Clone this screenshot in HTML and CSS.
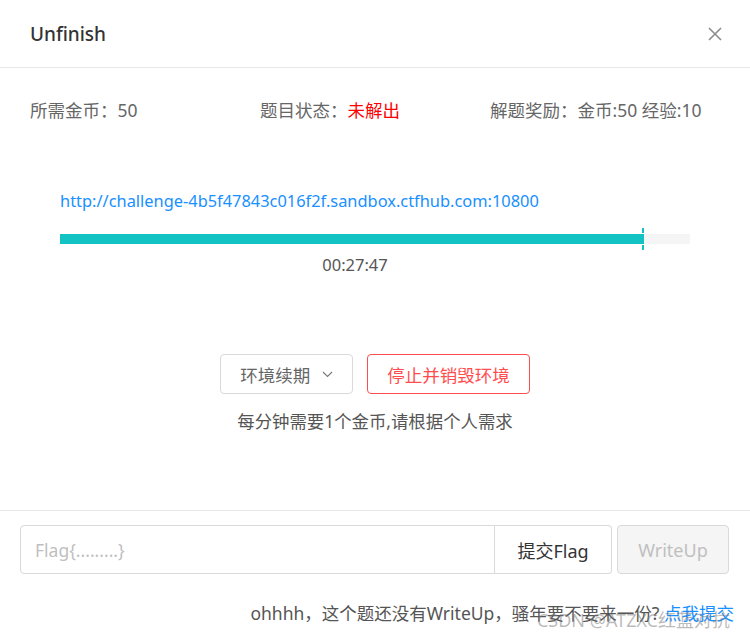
FILE: index.html
```html
<!DOCTYPE html>
<html lang="zh-CN">
<head>
    <meta charset="UTF-8">
    <title>Unfinish</title>
    <link rel="stylesheet" href="styles.css">
</head>
<body>
    <div class="modal">
        <!-- Header -->
        <div class="modal-header">
            <div class="modal-title">Unfinish</div>
            <button class="modal-close" aria-label="close">
                <svg width="14" height="14" viewBox="0 0 14 14">
                    <path d="M1 1L13 13M13 1L1 13" stroke="#8c8c8c" stroke-width="1.6" fill="none"/>
                </svg>
            </button>
        </div>

        <!-- Body -->
        <div class="modal-body">
            <div class="info-row">
                <div class="info-col">所需金币：50</div>
                <div class="info-col">题目状态：<span class="status-red">未解出</span></div>
                <div class="info-col">解题奖励：金币:50 经验:10</div>
            </div>

            <div class="env">
                <a class="env-link" href="#">http://challenge-4b5f47843c016f2f.sandbox.ctfhub.com:10800</a>
                <div class="progress">
                    <div class="progress-fill" style="width: 92.6%"></div>
                    <div class="progress-mark" style="left: 92.6%"></div>
                </div>
                <div class="progress-time">00:27:47</div>
            </div>

            <div class="actions">
                <button class="btn">环境续期
                    <svg width="11" height="7" viewBox="0 0 11 7">
                        <path d="M1 1L5.5 5.5L10 1" stroke="#777" stroke-width="1.1" fill="none"/>
                    </svg>
                </button>
                <button class="btn btn-danger">停止并销毁环境</button>
            </div>
            <div class="hint">每分钟需要1个金币,请根据个人需求</div>
        </div>

        <!-- Footer -->
        <div class="modal-footer">
            <div class="flag-row">
                <div class="input-group">
                    <input class="flag-input" type="text" placeholder="Flag{.........}">
                    <button class="btn-addon">提交Flag</button>
                </div>
                <button class="btn-disabled" disabled>WriteUp</button>
            </div>
            <div class="wu-tip">
                ohhhh，这个题还没有WriteUp，骚年要不要来一份? <a href="#">点我提交</a>
                <span class="watermark">CSDN @ATZXC红蓝对抗</span>
            </div>
        </div>
    </div>
</body>
</html>
```

FILE: styles.css
```css
/* Modal layout */
body {
    margin: 0;
    background: #fff;
    font-family: "Noto Sans", "Noto Sans CJK SC", sans-serif;
    color: #666;
}

.modal {
    width: 750px;
    height: 637px;
    overflow: hidden;
}

.modal-header {
    height: 67px;
    display: flex;
    align-items: center;
    justify-content: space-between;
    padding: 0 28px 0 30px;
    border-bottom: 1px solid #e8e8e8;
}

.modal-title {
    font-size: 19px;
    font-weight: 500;
    color: #333;
}

.modal-close {
    background: none;
    border: none;
    padding: 0;
    display: flex;
    cursor: pointer;
}

.modal-body {
    height: 442px;
    padding: 0 30px;
    border-bottom: 1px solid #e8e8e8;
}

.info-row {
    display: grid;
    grid-template-columns: repeat(3, 1fr);
    padding-top: 29px;
    font-size: 17.5px;
    line-height: 26px;
}

.status-red {
    color: #f00;
}

/* Environment + progress */
.env {
    padding: 65px 30px 0;
}

.env-link {
    display: block;
    color: #1890ff;
    font-size: 16.4px;
    line-height: 26px;
    text-decoration: none;
}

.progress {
    position: relative;
    height: 10px;
    margin-top: 20px;
    background: #f5f5f5;
}

.progress-fill {
    height: 100%;
    background: #13c2c2;
}

.progress-mark {
    position: absolute;
    top: -6px;
    bottom: -6px;
    width: 2px;
    margin-left: -1px;
    background: linear-gradient(#13c2c2 0 5px, transparent 5px 6px, #13c2c2 6px 16px, transparent 16px 17px, #13c2c2 17px);
}

.progress-time {
    margin-top: 9px;
    padding-right: 40px;
    text-align: center;
    font-size: 16.5px;
    line-height: 24px;
    color: #555;
}

/* Buttons */
.actions {
    display: flex;
    justify-content: center;
    gap: 14px;
    margin-top: 77px;
}

.btn {
    height: 40px;
    padding: 0 19px;
    display: flex;
    align-items: center;
    gap: 12px;
    background: #fff;
    border: 1px solid #d9d9d9;
    border-radius: 4px;
    font-family: inherit;
    font-size: 17.5px;
    color: #666;
    cursor: pointer;
}

.btn-danger {
    border-color: #ff4d4f;
    color: #ff4d4f;
}

.hint {
    margin-top: 14px;
    text-align: center;
    font-size: 17.4px;
    line-height: 26px;
    color: #555;
}

/* Footer */
.modal-footer {
    padding: 14px 20px 0;
}

.flag-row {
    display: flex;
    gap: 5px;
}

.input-group {
    display: flex;
    width: 592px;
}

.flag-input {
    flex: 1;
    height: 49px;
    box-sizing: border-box;
    padding: 0 14px;
    border: 1px solid #d9d9d9;
    border-radius: 4px 0 0 4px;
    font-family: inherit;
    font-size: 17.5px;
    outline: none;
}

.flag-input::placeholder {
    color: #bfbfbf;
}

.btn-addon {
    width: 117px;
    height: 49px;
    border: 1px solid #d9d9d9;
    border-left: none;
    border-radius: 0 4px 4px 0;
    background: #fff;
    font-family: inherit;
    font-size: 18px;
    color: #333;
}

.btn-disabled {
    width: 112px;
    height: 49px;
    border: 1px solid #d9d9d9;
    border-radius: 4px;
    background: #f5f5f5;
    font-family: inherit;
    font-size: 18px;
    color: #bfbfbf;
}

.wu-tip {
    position: relative;
    margin-top: 26px;
    margin-right: -4px;
    text-align: right;
    font-size: 17.5px;
    line-height: 26px;
    color: #555;
    white-space: nowrap;
}

.wu-tip a {
    color: #1890ff;
    text-decoration: none;
}

/* CSDN watermark over the tip */
.watermark {
    position: absolute;
    right: 4px;
    top: 7px;
    font-size: 18px;
    color: rgba(120, 120, 120, 0.5);
    pointer-events: none;
}
```
